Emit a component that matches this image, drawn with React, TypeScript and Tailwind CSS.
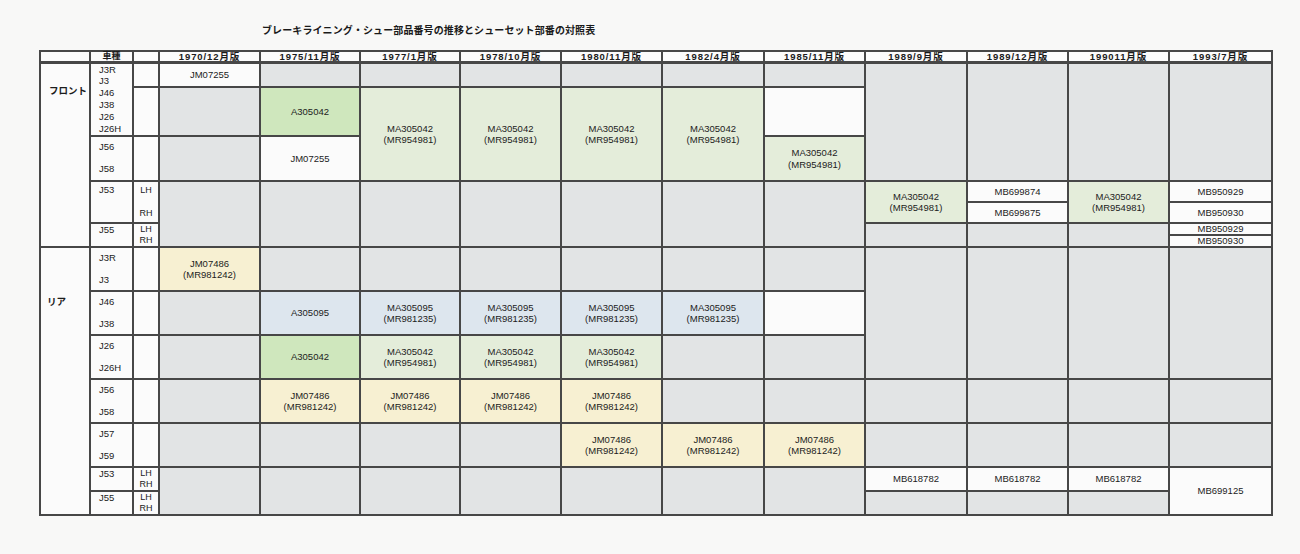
import React from "react";

type Cell = { p: string; bg: string; t?: string[] };

const G = "bg-[#e2e4e5]";
const W = "bg-[#fbfbfb]";
const SG = "bg-[#cfe7bd]";
const LG = "bg-[#e4edda]";
const B = "bg-[#dde6ee]";
const Y = "bg-[#f7f0d2]";

const MA42 = ["MA305042", "(MR954981)"];
const MA95 = ["MA305095", "(MR981235)"];
const JM86 = ["JM07486", "(MR981242)"];

const headers: { p: string; t: string }[] = [
  { p: "col-start-4 row-start-1", t: "1970/12月版" },
  { p: "col-start-5 row-start-1", t: "1975/11月版" },
  { p: "col-start-6 row-start-1", t: "1977/1月版" },
  { p: "col-start-7 row-start-1", t: "1978/10月版" },
  { p: "col-start-8 row-start-1", t: "1980/11月版" },
  { p: "col-start-9 row-start-1", t: "1982/4月版" },
  { p: "col-start-10 row-start-1", t: "1985/11月版" },
  { p: "col-start-11 row-start-1", t: "1989/9月版" },
  { p: "col-start-12 row-start-1", t: "1989/12月版" },
  { p: "col-start-13 row-start-1", t: "199011月版" },
  { p: "col-start-14 row-start-1", t: "1993/7月版" },
];

const cells: Cell[] = [
  // 1970/12
  { p: "col-start-4 row-start-2", bg: W, t: ["JM07255"] },
  { p: "col-start-4 row-start-3", bg: G },
  { p: "col-start-4 row-start-4", bg: G },
  { p: "col-start-4 row-start-5 row-span-4", bg: G },
  { p: "col-start-4 row-start-9", bg: Y, t: JM86 },
  { p: "col-start-4 row-start-10", bg: G },
  { p: "col-start-4 row-start-11", bg: G },
  { p: "col-start-4 row-start-12", bg: G },
  { p: "col-start-4 row-start-13", bg: G },
  { p: "col-start-4 row-start-14 row-span-2", bg: G },
  // 1975/11
  { p: "col-start-5 row-start-2", bg: G },
  { p: "col-start-5 row-start-3", bg: SG, t: ["A305042"] },
  { p: "col-start-5 row-start-4", bg: W, t: ["JM07255"] },
  { p: "col-start-5 row-start-5 row-span-4", bg: G },
  { p: "col-start-5 row-start-9", bg: G },
  { p: "col-start-5 row-start-10", bg: B, t: ["A305095"] },
  { p: "col-start-5 row-start-11", bg: SG, t: ["A305042"] },
  { p: "col-start-5 row-start-12", bg: Y, t: JM86 },
  { p: "col-start-5 row-start-13", bg: G },
  { p: "col-start-5 row-start-14 row-span-2", bg: G },
  // 1977/1
  { p: "col-start-6 row-start-2", bg: G },
  { p: "col-start-6 row-start-3 row-span-2", bg: LG, t: MA42 },
  { p: "col-start-6 row-start-5 row-span-4", bg: G },
  { p: "col-start-6 row-start-9", bg: G },
  { p: "col-start-6 row-start-10", bg: B, t: MA95 },
  { p: "col-start-6 row-start-11", bg: LG, t: MA42 },
  { p: "col-start-6 row-start-12", bg: Y, t: JM86 },
  { p: "col-start-6 row-start-13", bg: G },
  { p: "col-start-6 row-start-14 row-span-2", bg: G },
  // 1978/10
  { p: "col-start-7 row-start-2", bg: G },
  { p: "col-start-7 row-start-3 row-span-2", bg: LG, t: MA42 },
  { p: "col-start-7 row-start-5 row-span-4", bg: G },
  { p: "col-start-7 row-start-9", bg: G },
  { p: "col-start-7 row-start-10", bg: B, t: MA95 },
  { p: "col-start-7 row-start-11", bg: LG, t: MA42 },
  { p: "col-start-7 row-start-12", bg: Y, t: JM86 },
  { p: "col-start-7 row-start-13", bg: G },
  { p: "col-start-7 row-start-14 row-span-2", bg: G },
  // 1980/11
  { p: "col-start-8 row-start-2", bg: G },
  { p: "col-start-8 row-start-3 row-span-2", bg: LG, t: MA42 },
  { p: "col-start-8 row-start-5 row-span-4", bg: G },
  { p: "col-start-8 row-start-9", bg: G },
  { p: "col-start-8 row-start-10", bg: B, t: MA95 },
  { p: "col-start-8 row-start-11", bg: LG, t: MA42 },
  { p: "col-start-8 row-start-12", bg: Y, t: JM86 },
  { p: "col-start-8 row-start-13", bg: Y, t: JM86 },
  { p: "col-start-8 row-start-14 row-span-2", bg: G },
  // 1982/4
  { p: "col-start-9 row-start-2", bg: G },
  { p: "col-start-9 row-start-3 row-span-2", bg: LG, t: MA42 },
  { p: "col-start-9 row-start-5 row-span-4", bg: G },
  { p: "col-start-9 row-start-9", bg: G },
  { p: "col-start-9 row-start-10", bg: B, t: MA95 },
  { p: "col-start-9 row-start-11", bg: G },
  { p: "col-start-9 row-start-12", bg: G },
  { p: "col-start-9 row-start-13", bg: Y, t: JM86 },
  { p: "col-start-9 row-start-14 row-span-2", bg: G },
  // 1985/11
  { p: "col-start-10 row-start-2", bg: G },
  { p: "col-start-10 row-start-3", bg: W },
  { p: "col-start-10 row-start-4", bg: LG, t: MA42 },
  { p: "col-start-10 row-start-5 row-span-4", bg: G },
  { p: "col-start-10 row-start-9", bg: G },
  { p: "col-start-10 row-start-10", bg: W },
  { p: "col-start-10 row-start-11", bg: G },
  { p: "col-start-10 row-start-12", bg: G },
  { p: "col-start-10 row-start-13", bg: Y, t: JM86 },
  { p: "col-start-10 row-start-14 row-span-2", bg: G },
  // 1989/9
  { p: "col-start-11 row-start-2 row-span-3", bg: G },
  { p: "col-start-11 row-start-5 row-span-2", bg: LG, t: MA42 },
  { p: "col-start-11 row-start-7 row-span-2", bg: G },
  { p: "col-start-11 row-start-9 row-span-3", bg: G },
  { p: "col-start-11 row-start-12", bg: G },
  { p: "col-start-11 row-start-13", bg: G },
  { p: "col-start-11 row-start-14", bg: W, t: ["MB618782"] },
  { p: "col-start-11 row-start-15", bg: G },
  // 1989/12
  { p: "col-start-12 row-start-2 row-span-3", bg: G },
  { p: "col-start-12 row-start-5", bg: W, t: ["MB699874"] },
  { p: "col-start-12 row-start-6", bg: W, t: ["MB699875"] },
  { p: "col-start-12 row-start-7 row-span-2", bg: G },
  { p: "col-start-12 row-start-9 row-span-3", bg: G },
  { p: "col-start-12 row-start-12", bg: G },
  { p: "col-start-12 row-start-13", bg: G },
  { p: "col-start-12 row-start-14", bg: W, t: ["MB618782"] },
  { p: "col-start-12 row-start-15", bg: G },
  // 199011
  { p: "col-start-13 row-start-2 row-span-3", bg: G },
  { p: "col-start-13 row-start-5 row-span-2", bg: LG, t: MA42 },
  { p: "col-start-13 row-start-7 row-span-2", bg: G },
  { p: "col-start-13 row-start-9 row-span-3", bg: G },
  { p: "col-start-13 row-start-12", bg: G },
  { p: "col-start-13 row-start-13", bg: G },
  { p: "col-start-13 row-start-14", bg: W, t: ["MB618782"] },
  { p: "col-start-13 row-start-15", bg: G },
  // 1993/7
  { p: "col-start-14 row-start-2 row-span-3", bg: G },
  { p: "col-start-14 row-start-5", bg: W, t: ["MB950929"] },
  { p: "col-start-14 row-start-6", bg: W, t: ["MB950930"] },
  { p: "col-start-14 row-start-7", bg: W, t: ["MB950929"] },
  { p: "col-start-14 row-start-8", bg: W, t: ["MB950930"] },
  { p: "col-start-14 row-start-9 row-span-3", bg: G },
  { p: "col-start-14 row-start-12", bg: G },
  { p: "col-start-14 row-start-13", bg: G },
  { p: "col-start-14 row-start-14 row-span-2", bg: W, t: ["MB699125"] },
];

type Side = { p: string; lines: string[]; cls: string };

const models: Side[] = [
  { p: "col-start-2 row-start-2", lines: ["J3R", "J3"], cls: "justify-between leading-[11px]" },
  { p: "col-start-2 row-start-3", lines: ["J46", "J38", "J26", "J26H"], cls: "justify-center leading-[12px] -mt-[2px]" },
  { p: "col-start-2 row-start-4", lines: ["J56", "J58"], cls: "justify-between leading-[12px] pt-[4px] pb-[5px]" },
  { p: "col-start-2 row-start-5 row-span-2", lines: ["J53"], cls: "justify-start leading-[12px] pt-[2px]" },
  { p: "col-start-2 row-start-7 row-span-2", lines: ["J55"], cls: "justify-start leading-[11px]" },
  { p: "col-start-2 row-start-9", lines: ["J3R", "J3"], cls: "justify-between leading-[12px] py-[4px]" },
  { p: "col-start-2 row-start-10", lines: ["J46", "J38"], cls: "justify-between leading-[12px] py-[4px]" },
  { p: "col-start-2 row-start-11", lines: ["J26", "J26H"], cls: "justify-between leading-[12px] py-[4px]" },
  { p: "col-start-2 row-start-12", lines: ["J56", "J58"], cls: "justify-between leading-[12px] py-[4px]" },
  { p: "col-start-2 row-start-13", lines: ["J57", "J59"], cls: "justify-between leading-[12px] py-[4px]" },
  { p: "col-start-2 row-start-14", lines: ["J53"], cls: "justify-start leading-[11px]" },
  { p: "col-start-2 row-start-15", lines: ["J55"], cls: "justify-start leading-[11px]" },
];

const sides: Side[] = [
  { p: "col-start-3 row-start-2", lines: [], cls: "" },
  { p: "col-start-3 row-start-3", lines: [], cls: "" },
  { p: "col-start-3 row-start-4", lines: [], cls: "" },
  { p: "col-start-3 row-start-5 row-span-2", lines: ["LH", "RH"], cls: "justify-between leading-[12px] pt-[2px] pb-[3px]" },
  { p: "col-start-3 row-start-7 row-span-2", lines: ["LH", "RH"], cls: "justify-between leading-[11px]" },
  { p: "col-start-3 row-start-9", lines: [], cls: "" },
  { p: "col-start-3 row-start-10", lines: [], cls: "" },
  { p: "col-start-3 row-start-11", lines: [], cls: "" },
  { p: "col-start-3 row-start-12", lines: [], cls: "" },
  { p: "col-start-3 row-start-13", lines: [], cls: "" },
  { p: "col-start-3 row-start-14", lines: ["LH", "RH"], cls: "justify-between leading-[11px]" },
  { p: "col-start-3 row-start-15", lines: ["LH", "RH"], cls: "justify-between leading-[11px]" },
];

export default function App() {
  return (
    <div className="w-[1300px] h-[554px] bg-[#f8f8f7] overflow-hidden font-['Liberation_Sans','Noto_Sans_CJK_JP',sans-serif] text-[#1c1c1c]">
      <div className="pt-[24px] pl-[262px] h-[50px]">
        <h1 className="text-[10px] leading-[13px] font-bold tracking-[0.1px] text-[#1a1a1a]">
          ブレーキライニング・シュー部品番号の推移とシューセット部番の対照表
        </h1>
      </div>
      <div className="ml-[39px] w-max grid bg-[#474747] p-[2px] gap-[2px] grid-cols-[48px_41px_24px_99px_98px_98px_99px_99px_100px_99px_100px_99px_99px_101px] grid-rows-[10px_22px_47px_43px_19px_19px_10px_10px_42px_42px_42px_42px_42px_22px_22px]">
        <div className={`col-start-1 row-start-1 ${W} border-b border-[#474747]`} />
        <div className={`col-start-2 row-start-1 ${W} border-b border-[#474747] flex items-center justify-center text-[9px] leading-none font-semibold`}>
          車種
        </div>
        <div className={`col-start-3 row-start-1 ${W} border-b border-[#474747]`} />
        {headers.map((h) => (
          <div
            key={h.p}
            className={`${h.p} ${W} border-b border-[#474747] flex items-center justify-center text-[9.5px] leading-none font-semibold tracking-[0.9px]`}
          >
            {h.t}
          </div>
        ))}

        <div className={`col-start-1 row-start-2 row-span-7 ${W} pl-[8px] pt-[21px] text-[9.5px] leading-[12px] font-semibold`}>
          フロント
        </div>
        <div className={`col-start-1 row-start-9 row-span-7 ${W} pl-[6px] pt-[48px] text-[9.5px] leading-[12px] font-semibold`}>
          リア
        </div>

        {models.map((m) => (
          <div key={m.p} className={`${m.p} ${W} flex flex-col pl-[8px] text-[9.5px] ${m.cls}`}>
            {m.lines.map((l, i) => (
              <span key={i}>{l}</span>
            ))}
          </div>
        ))}
        {sides.map((m) => (
          <div key={m.p} className={`${m.p} ${W} flex flex-col items-center text-[9px] ${m.cls}`}>
            {m.lines.map((l, i) => (
              <span key={i}>{l}</span>
            ))}
          </div>
        ))}

        {cells.map((c) => (
          <div
            key={c.p}
            className={`${c.p} ${c.bg} flex flex-col items-center justify-center text-center text-[9.5px] leading-[11.5px]`}
          >
            {c.t?.map((l, i) => (
              <span key={i}>{l}</span>
            ))}
          </div>
        ))}
      </div>
    </div>
  );
}
